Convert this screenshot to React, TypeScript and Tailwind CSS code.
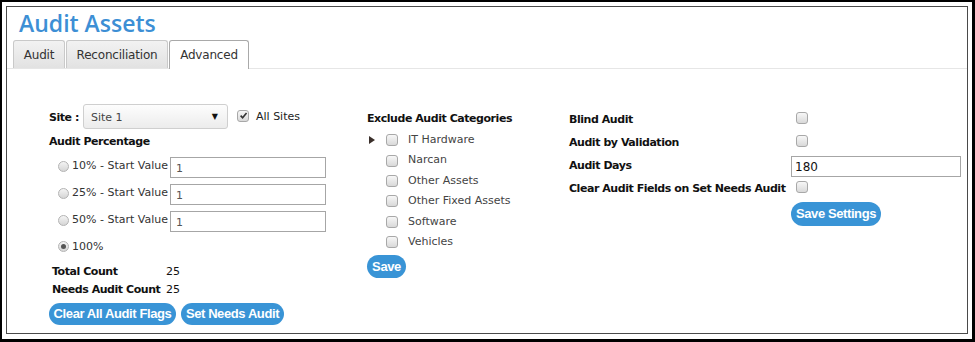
import { ReactNode } from 'react'

const BODY = "font-['DejaVu_Sans',Verdana,sans-serif]"
const LABEL = 'font-bold tracking-[-0.45px] text-[#111]'

function Box({ checked = false }: { checked?: boolean }) {
  return (
    <span className="relative inline-flex h-[12px] w-[12px] shrink-0 items-center justify-center rounded-[3px] border border-[#a8a8a8] bg-linear-to-b from-[#f7f7f7] to-[#d9d9d9]">
      {checked && (
        <svg viewBox="0 0 10 10" className="h-[9px] w-[9px]">
          <path d="M1.8 5.2 L4 7.5 L8.4 2.2" fill="none" stroke="#333" strokeWidth="1.8" />
        </svg>
      )}
    </span>
  )
}

function Radio({ checked = false }: { checked?: boolean }) {
  return (
    <span className="inline-flex h-[11px] w-[11px] shrink-0 items-center justify-center rounded-full border border-[#b3b3b3] bg-linear-to-b from-[#f4f4f4] to-[#d6d6d6]">
      {checked && <span className="h-[5px] w-[5px] rounded-full bg-[#555]" />}
    </span>
  )
}

function Pill({ children, className = '' }: { children: ReactNode; className?: string }) {
  return (
    <button
      className={`flex items-center justify-center whitespace-nowrap rounded-full bg-[#3994d6] font-['Liberation_Sans',Arial,sans-serif] text-[13px] font-bold tracking-[-0.4px] text-white ${className}`}
    >
      {children}
    </button>
  )
}

const tabs = [
  { label: 'Audit', w: 'w-[52px]' },
  { label: 'Reconciliation', w: 'w-[102px]' },
  { label: 'Advanced', w: 'w-[80px]', active: true },
]

const startRows = ['10%', '25%', '50%']
const categories = ['IT Hardware', 'Narcan', 'Other Assets', 'Other Fixed Assets', 'Software', 'Vehicles']

export default function App() {
  return (
    <div className={`h-[342px] w-[975px] border-b-[3px] border-l-2 border-r-[3px] border-t-2 border-black bg-white pb-[5px] pl-1 pr-1 pt-1 ${BODY}`}>
      <div className="h-full border border-[#4a4a4a]">
        {/* Title */}
        <h1 className="ml-[12px] mt-[1px] h-[30px] font-['Open_Sans',sans-serif] text-[23px] font-semibold leading-[30px] text-[#3d8fd5]">
          Audit Assets
        </h1>

        {/* Tabs */}
        <div className="mt-[3px] flex h-[28px] items-end gap-[1px] border-b border-[#e6e6e6] pl-[6px]">
          {tabs.map((t) => (
            <div
              key={t.label}
              className={`flex h-[28px] items-center justify-center rounded-t-[3px] border border-b-0 text-[12px] tracking-[-0.2px] text-[#333] ${t.w} ${
                t.active
                  ? '-mb-[1px] h-[29px] border-[#a9a9a9] bg-white'
                  : 'border-[#c9c9c9] bg-linear-to-b from-[#f2f2f2] to-[#e2e2e2]'
              }`}
            >
              {t.label}
            </div>
          ))}
        </div>

        {/* Content */}
        <div className="flex pl-[42px]">
          {/* Left column */}
          <div className="w-[318px] pt-[35px]">
            <div className="flex h-[25px] items-center">
              <span className={`mt-[3px] w-[34px] text-[11px] ${LABEL}`}>Site :</span>
              <div className="flex h-[25px] w-[145px] items-center justify-between rounded-[3px] border border-[#cfcfcf] bg-linear-to-b from-[#fdfdfd] to-[#ececec] pl-[7px] pr-[9px]">
                <span className="pt-[3px] text-[11px] text-[#444]">Site 1</span>
                <span className="text-[8px] text-[#111]">▼</span>
              </div>
              <span className="ml-[9px] mt-[-3px]">
                <Box checked />
              </span>
              <span className="ml-[7px] mt-[1px] text-[11px] text-[#222]">All Sites</span>
            </div>

            <div className={`mt-[5px] flex h-[16px] items-center text-[11px] ${LABEL}`}>Audit Percentage</div>

            <div className="mt-[7px] flex flex-col gap-[6px]">
              {startRows.map((p) => (
                <div key={p} className="flex h-[21px] items-center">
                  <div className="ml-[9px] flex w-[112px] items-center gap-[3px] self-start pt-[1px] text-[11px] text-[#333]">
                    <Radio />
                    <span>{p} - Start Value</span>
                  </div>
                  <div className="flex h-[21px] w-[156px] items-center border border-[#a6a6a6] pl-[5px] pt-[3px] text-[11px] text-[#555]">
                    1
                  </div>
                </div>
              ))}
            </div>

            <div className="ml-[9px] mt-[6px] flex h-[16px] items-center gap-[3px] text-[11px] text-[#333]">
              <Radio checked />
              <span className="mt-[3px]">100%</span>
            </div>

            <div className="ml-[3px] mt-[9px] text-[11px] text-[#111]">
              <div className="flex h-[18px] items-center">
                <span className={`w-[114px] whitespace-nowrap ${LABEL}`}>Total Count</span>
                <span>25</span>
              </div>
              <div className="flex h-[18px] items-center">
                <span className={`w-[114px] whitespace-nowrap ${LABEL}`}>Needs Audit Count</span>
                <span>25</span>
              </div>
            </div>

            <div className="mt-[4px] flex gap-[5px]">
              <Pill className="h-[22px] w-[127px]">Clear All Audit Flags</Pill>
              <Pill className="h-[22px] w-[103px]">Set Needs Audit</Pill>
            </div>
          </div>

          {/* Middle column */}
          <div className="w-[202px] pt-[42px]">
            <div className={`flex h-[16px] items-center text-[11px] ${LABEL}`}>Exclude Audit Categories</div>
            <div className="mt-[3px] flex flex-col">
              {categories.map((c, i) => (
                <div key={c} className="flex h-[20.4px] items-center text-[11px] text-[#444]">
                  <span className="flex w-[19px] items-center pl-[2px]">
                    {i === 0 && (
                      <svg viewBox="0 0 6 8" className="h-[8px] w-[6px]">
                        <path d="M0 0 L6 4 L0 8 Z" fill="#3a2f2a" />
                      </svg>
                    )}
                  </span>
                  <Box />
                  <span className="ml-[10px]">{c}</span>
                </div>
              ))}
            </div>
            <Pill className="mt-[3px] h-[23px] w-[39px]">Save</Pill>
          </div>

          {/* Right column */}
          <div className="flex-1 pt-[40px] text-[11px]">
            <div className="flex h-[23px] items-center">
              <span className={`w-[222px] ${LABEL}`}>Blind Audit</span>
              <span className="ml-[5px]">
                <Box />
              </span>
            </div>
            <div className="flex h-[23px] items-center">
              <span className={`w-[222px] ${LABEL}`}>Audit by Validation</span>
              <span className="ml-[5px]">
                <Box />
              </span>
            </div>
            <div className="flex h-[23px] items-center">
              <span className={`w-[222px] ${LABEL}`}>Audit Days</span>
              <div className="flex h-[21px] w-[170px] items-center border border-[#a6a6a6] pl-[3px] text-[12px] text-[#111]">180</div>
            </div>
            <div className="flex h-[23px] items-center">
              <span className={`w-[222px] whitespace-nowrap ${LABEL}`}>Clear Audit Fields on Set Needs Audit</span>
              <span className="ml-[5px]">
                <Box />
              </span>
            </div>
            <Pill className="ml-[222px] mt-[1px] h-[24px] w-[90px]">Save Settings</Pill>
          </div>
        </div>
      </div>
    </div>
  )
}
